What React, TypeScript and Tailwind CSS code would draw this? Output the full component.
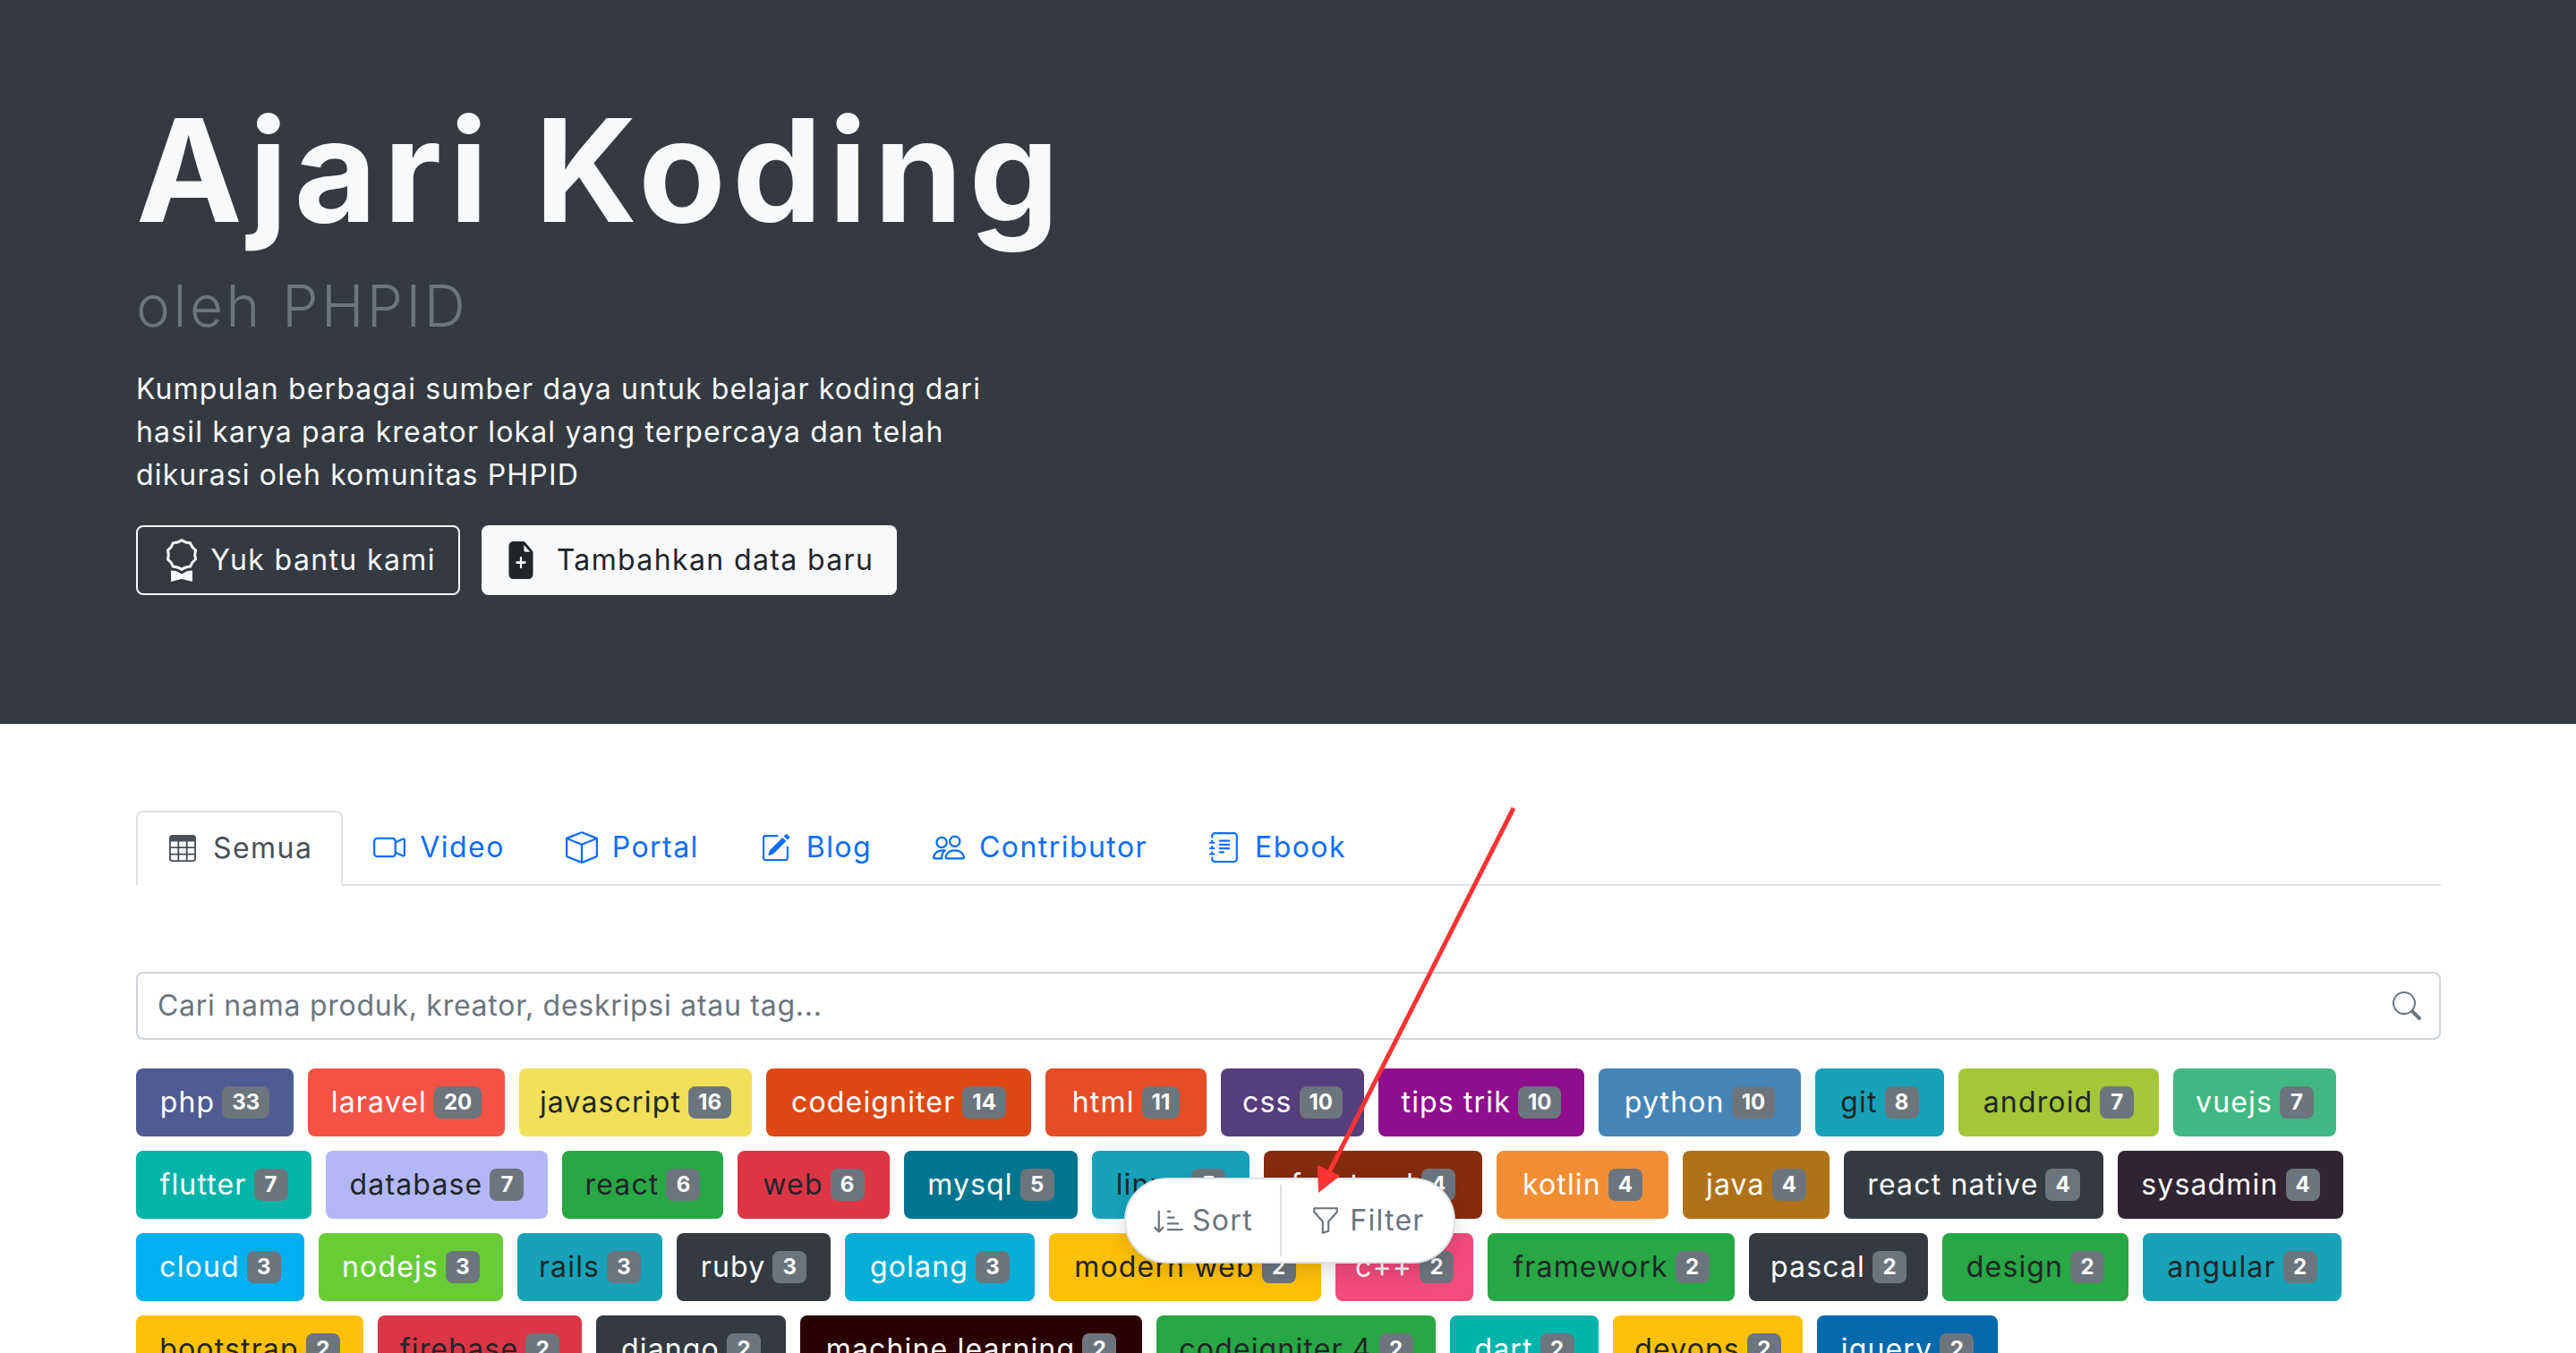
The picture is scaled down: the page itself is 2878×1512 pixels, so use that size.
import {
  BsAward,
  BsBox,
  BsCameraVideo,
  BsFileEarmarkPlusFill,
  BsFunnel,
  BsJournalText,
  BsPencilSquare,
  BsPeople,
  BsSearch,
  BsSortDownAlt,
  BsTable,
} from 'react-icons/bs'

const FONT = "font-['Inter','Noto_Sans',sans-serif]"

const TAGS = [
  ['php', 33, 'w-[176px] bg-[#4f5b93] text-white'],
  ['laravel', 20, 'w-[220px] bg-[#f55247] text-white'],
  ['javascript', 16, 'w-[260px] bg-[#f1e05a] text-[#212529]'],
  ['codeigniter', 14, 'w-[296px] bg-[#dd4814] text-white'],
  ['html', 11, 'w-[180px] bg-[#e54d26] text-white'],
  ['css', 10, 'w-[160px] bg-[#563d7c] text-white'],
  ['tips trik', 10, 'w-[230px] bg-[#8e0e8e] text-white'],
  ['python', 10, 'w-[226px] bg-[#4584b6] text-white'],
  ['git', 8, 'w-[144px] bg-[#17a2b8] text-[#212529]'],
  ['android', 7, 'w-[224px] bg-[#a4c639] text-[#212529]'],
  ['vuejs', 7, 'w-[182px] bg-[#41b883] text-white'],
  ['flutter', 7, 'w-[196px] bg-[#02b5a8] text-white'],
  ['database', 7, 'w-[248px] bg-[#b3b7f5] text-[#212529]'],
  ['react', 6, 'w-[180px] bg-[#28a745] text-[#212529]'],
  ['web', 6, 'w-[170px] bg-[#dc3545] text-[#212529]'],
  ['mysql', 5, 'w-[194px] bg-[#00758f] text-white'],
  ['linux', 5, 'w-[176px] bg-[#17a2b8] text-[#212529]'],
  ['frontend', 4, 'w-[244px] bg-[#852b0e] text-white'],
  ['kotlin', 4, 'w-[192px] bg-[#f18e33] text-white'],
  ['java', 4, 'w-[164px] bg-[#b07219] text-white'],
  ['react native', 4, 'w-[290px] bg-[#343a40] text-white'],
  ['sysadmin', 4, 'w-[252px] bg-[#2f2430] text-white'],
  ['cloud', 3, 'w-[188px] bg-[#00b0f0] text-white'],
  ['nodejs', 3, 'w-[206px] bg-[#68cd35] text-white'],
  ['rails', 3, 'w-[162px] bg-[#17a2b8] text-[#212529]'],
  ['ruby', 3, 'w-[172px] bg-[#343a40] text-white'],
  ['golang', 3, 'w-[212px] bg-[#06aed5] text-white'],
  ['modern web', 2, 'w-[304px] bg-[#ffc107] text-[#212529]'],
  ['c++', 2, 'w-[154px] bg-[#f34b7d] text-white'],
  ['framework', 2, 'w-[276px] bg-[#28a745] text-[#212529]'],
  ['pascal', 2, 'w-[200px] bg-[#343a40] text-white'],
  ['design', 2, 'w-[208px] bg-[#28a745] text-[#212529]'],
  ['angular', 2, 'w-[222px] bg-[#17a2b8] text-[#212529]'],
  ['bootstrap', 2, 'w-[254px] bg-[#ffc107] text-[#212529]'],
  ['firebase', 2, 'w-[228px] bg-[#dc3545] text-[#212529]'],
  ['django', 2, 'w-[212px] bg-[#343a40] text-white'],
  ['machine learning', 2, 'w-[382px] bg-[#2b0000] text-white'],
  ['codeigniter 4', 2, 'w-[312px] bg-[#28a745] text-[#212529]'],
  ['dart', 2, 'w-[166px] bg-[#00b4ab] text-white'],
  ['devops', 2, 'w-[212px] bg-[#ffc107] text-[#212529]'],
  ['jquery', 2, 'w-[202px] bg-[#0769ad] text-white'],
] as const

const TABS = [
  { label: 'Video', icon: BsCameraVideo, size: 'size-[36px]' },
  { label: 'Portal', icon: BsBox, size: 'size-[36px]' },
  { label: 'Blog', icon: BsPencilSquare, size: 'size-[33px]' },
  { label: 'Contributor', icon: BsPeople, size: 'size-[36px]' },
  { label: 'Ebook', icon: BsJournalText, size: 'size-[34px]' },
]

function Tag({ name, count, className }: { name: string; count: number; className: string }) {
  return (
    <span className={`flex h-[76px] items-center justify-center gap-2 rounded-lg text-[32px] tracking-[0.036em] ${className}`}>
      {name}
      <span className="flex h-9 min-w-[38px] items-center justify-center rounded-lg bg-[#6c757d] px-[11px] text-[24px] font-bold tracking-normal text-white">
        {count}
      </span>
    </span>
  )
}

function Header() {
  return (
    <header className="h-[809px] bg-[#343a40] px-[152px] pt-[96px]">
      <h1 className="text-[159px] font-bold leading-[188px] tracking-[0.047em] text-[#f8f9fa]">Ajari Koding</h1>
      <p className="mt-[19px] text-[64px] font-light leading-[77px] tracking-[0.055em] text-[#6c757d]">oleh PHPID</p>
      <p className="mt-[31px] w-[1000px] text-[32px] leading-[48px] tracking-[0.036em] text-[#f8f9fa]">
        Kumpulan berbagai sumber daya untuk belajar koding dari
        <br />
        hasil karya para kreator lokal yang terpercaya dan telah
        <br />
        dikurasi oleh komunitas PHPID
      </p>
      <div className="mt-[32px] flex gap-[24px]">
        <button type="button" className="flex h-[78px] w-[362px] items-center justify-center gap-[8px] rounded-lg border-2 border-[#f8f9fa] text-[32px] tracking-[0.043em] text-[#f8f9fa]">
          <BsAward className="size-[48px]" />
          Yuk bantu kami
        </button>
        <button type="button" className="flex h-[78px] w-[464px] items-center justify-center gap-[22px] rounded-lg bg-[#f8f9fa] text-[32px] tracking-[0.043em] text-[#212529]">
          <BsFileEarmarkPlusFill className="h-[42px] w-[36px]" preserveAspectRatio="none" />
          Tambahkan data baru
        </button>
      </div>
    </header>
  )
}

function Tabs() {
  return (
    <nav className="flex h-[84px] border-b-2 border-[#dee2e6] text-[32px] tracking-[0.045em]">
      <span className="-mb-[2px] flex h-[84px] items-center gap-[16px] rounded-t-lg border-2 border-[#dee2e6] border-b-white bg-white px-[32px] text-[#495057]">
        <span className="flex w-[36px] justify-center">
          <BsTable className="size-[30px]" />
        </span>
        Semua
      </span>
      {TABS.map(({ label, icon: Icon, size }) => (
        <span key={label} className="flex items-center gap-[16px] px-[34px] text-[#0d6efd]">
          <span className="flex w-[36px] justify-center">
            <Icon className={size} />
          </span>
          {label}
        </span>
      ))}
    </nav>
  )
}

function SortFilterPill() {
  return (
    <div className="absolute left-[1256px] top-[1316px] flex h-[96px] w-[370px] items-center rounded-full border-2 border-[#dee2e6] bg-white text-[32px] tracking-[0.04em] text-[#6c757d] shadow-[0_8px_24px_rgba(0,0,0,0.15)]">
      <span className="flex w-[172px] items-center justify-center gap-[8px]">
        <BsSortDownAlt className="size-[36px]" />
        Sort
      </span>
      <span className="h-[80px] w-[2px] bg-[#dee2e6]" />
      <span className="flex flex-1 items-center justify-center gap-[10px]">
        <BsFunnel className="size-[34px]" />
        Filter
      </span>
    </div>
  )
}

function RedArrow() {
  return (
    <svg className="pointer-events-none absolute left-0 top-0" width="2878" height="1512" fill="none">
      <line x1="1691" y1="903" x2="1484" y2="1312" stroke="#ff3333" strokeWidth="5" />
      <polygon points="1473,1333 1472,1302 1497,1314" fill="#ff3333" />
    </svg>
  )
}

export default function App() {
  return (
    <div className={`relative h-[1512px] overflow-hidden bg-white text-[#212529] ${FONT}`}>
      <Header />
      <main className="pl-[152px] pr-[151px] pt-[97px]">
        <Tabs />
        <div className="mt-[96px] flex h-[76px] items-center justify-between rounded-lg border-2 border-[#ced4da] pl-[22px] pr-[20px]">
          <span className="text-[32px] tracking-[0.023em] text-[#6c757d]">Cari nama produk, kreator, deskripsi atau tag...</span>
          <BsSearch className="size-[32px] text-[#6c757d]" />
        </div>
        <div className="mt-[32px] flex flex-wrap gap-4">
          {TAGS.map(([name, count, className]) => (
            <Tag key={name} name={name} count={count} className={className} />
          ))}
        </div>
      </main>
      <SortFilterPill />
      <RedArrow />
    </div>
  )
}
